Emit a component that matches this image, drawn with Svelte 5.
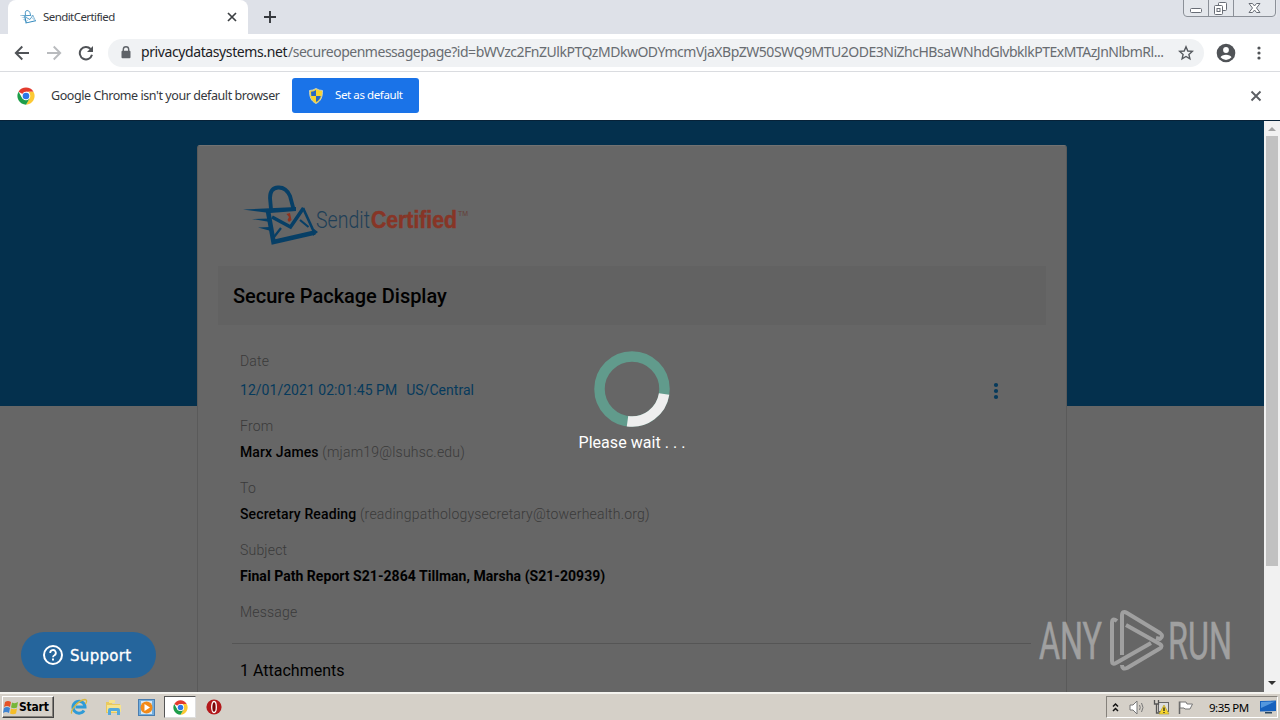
<script>
  const fields = [
    { label: 'From', name: 'Marx James', rest: '(mjam19@lsuhsc.edu)' },
    { label: 'To', name: 'Secretary Reading', rest: '(readingpathologysecretary@towerhealth.org)' }
  ];
</script>

{#snippet chrome(size)}
  <svg width={size} height={size} viewBox="0 0 48 48">
    <circle cx="24" cy="24" r="23" fill="#fff" />
    <path d="M24 24 4.1 12.5A23 23 0 0 1 43.9 12.5H24Z" fill="#e33b2e" />
    <path d="M43.9 12.5A23 23 0 0 1 24 47L34 29.5 33.5 18 31 12.5Z" fill="#fcc934" />
    <path d="M4.1 12.5A23 23 0 0 0 24 47L34 30 24 34 14 30Z" fill="#1e9e4a" />
    <circle cx="24" cy="24" r="11.5" fill="#fff" />
    <circle cx="24" cy="24" r="8.8" fill="#2d78e8" />
  </svg>
{/snippet}

{#snippet lock()}
  <g fill="none" stroke="currentColor" stroke-linejoin="miter">
    <path d="M28 24 27 13Q27 3 35 2.500Q43 2 47 11L50.500 24" stroke-width="3.800" />
    <path d="M25 26 30.500 57 72 47.500" stroke-width="4.600" />
    <path d="M60 23 71 47" stroke-width="2.600" />
    <path d="M29 32 47.500 42 60.500 23" stroke-width="3.600" />
    <path d="M31 52 38 43M65.500 42 57 35" stroke-width="2.200" />
  </g>
  <path d="M0 24.500 53 22V26L27 28ZM9 34 26 33.500 27 37ZM15 42.500 27 42 28 46ZM71 44 75 47 70 51Z" fill="currentColor" />
{/snippet}

<div class="screen">
  <header class="tabs">
    <div class="tab">
      <svg class="fav" width="16" height="16" viewBox="4 0 70 62">{@render lock()}</svg>
      <span class="tabname">SenditCertified</span>
      <svg class="tabx" width="10" height="10" viewBox="0 0 10 10"><path d="M1 1 9 9M9 1 1 9" stroke="#3c4043" stroke-width="1.7" /></svg>
    </div>
    <svg class="plus" width="12" height="12" viewBox="0 0 12 12"><path d="M6 0V12M0 6H12" stroke="#35383d" stroke-width="1.9" /></svg>
    <svg class="winbtns" width="94" height="17" viewBox="0 0 94 17" fill="none" stroke="#686d76">
      <path d="M.5 0V13Q.5 16.5 4 16.5H89Q92.500 16.500 92.500 13V0M25.500 0V16M50.500 0V16" stroke="#8b9098" />
      <rect x="7.500" y="8.500" width="11" height="4" rx="1" fill="#fff" />
      <rect x="35.500" y="2.500" width="8" height="8" rx="1" fill="#fff" />
      <rect x="31.500" y="5.500" width="8" height="9" rx="1" fill="#fff" /><rect x="34" y="8.500" width="3" height="3" />
      <path d="M66 3.500H69.500L71.500 6 73.500 3.500H77L73.500 8 77 12.500H73.500L71.500 10 69.500 12.500H66L69.500 8Z" fill="#fff" />
    </svg>
  </header>

  <nav class="toolbar">
    <svg class="back" width="16" height="16" viewBox="0 0 16 16" fill="none" stroke="#505357" stroke-width="1.9"><path d="M15 8H2M8.300 1.500 1.800 8 8.300 14.500" /></svg>
    <svg class="fwd" width="16" height="16" viewBox="0 0 16 16" fill="none" stroke="#b9bbbe" stroke-width="1.900"><path d="M1 8H14M7.700 1.500 14.200 8 7.700 14.500" /></svg>
    <svg class="reload" width="16" height="16" viewBox="0 0 16 16"><path d="M12.600 4A6.200 6.200 0 1 0 14 9.800" fill="none" stroke="#505357" stroke-width="2" /><path d="M15 1V7H9Z" fill="#505357" /></svg>
    <div class="omni">
      <svg class="padlock" width="10" height="13" viewBox="0 0 10 13"><path d="M2.300 6V3.500A2.700 2.700 0 0 1 7.700 3.500V6" fill="none" stroke="#5f6368" stroke-width="1.400" /><rect x="0.500" y="4.800" width="9" height="7.500" rx="1" fill="#5f6368" /></svg>
      <span class="host">privacydatasystems.net</span><span class="path">/secureopenmessagepage?id=bWVzc2FnZUlkPTQzMDkwODYmcmVjaXBpZW50SWQ9MTU2ODE3NiZhcHBsaWNhdGlvbklkPTExMTAzJnNlbmRl...</span>
      <svg class="star" width="16" height="16" viewBox="0 0 16 16"><path d="M8 1.800 9.800 6 14.300 6.400 10.900 9.400 11.900 13.800 8 11.500 4.100 13.800 5.100 9.400 1.700 6.400 6.200 6Z" fill="none" stroke="#54585d" stroke-width="1.400" /></svg>
    </div>
    <svg class="user" width="20" height="20" viewBox="0 0 20 20"><circle cx="10" cy="10" r="9.300" fill="#505357" /><circle cx="10" cy="7" r="2.900" fill="#fff" /><path d="M4.500 14.200C5.500 10.800 14.500 10.800 15.500 14.200Q13 17 10 17T4.500 14.200Z" fill="#fff" /></svg>
    <svg class="dots" width="4" height="14" viewBox="0 0 4 14" fill="#505357"><circle cx="2" cy="2" r="1.600" /><circle cx="2" cy="7" r="1.600" /><circle cx="2" cy="12" r="1.600" /></svg>
  </nav>

  <div class="infobar">
    {@render chrome(18)}
    <span class="infotext">Google Chrome isn't your default browser</span>
    <button class="default">
      <svg width="14" height="16" viewBox="0 0 14 16"><path d="M7 .5Q10 2.500 13.500 2.500C13.500 9 12 13 7 15.500C2 13 .5 9 .5 2.500Q4 2.500 7 .5Z" fill="#f8d32f" stroke="#c7cfbb" /><path d="M7 2Q5 3.500 2 3.700L2.300 8H7ZM7 8H11.800Q11 12 7 14Z" fill="#2867c4" /></svg>
      <span>Set as default</span>
    </button>
    <svg class="infox" width="12" height="12" viewBox="0 0 12 12"><path d="M1.500 1.500 10.500 10.500M10.500 1.500 1.500 10.500" stroke="#5b5e63" stroke-width="1.900" /></svg>
  </div>

  <main class="viewport">
    <div class="page">
      <section class="card">
        <svg class="brand" width="240" height="68" viewBox="0 0 240 68">
          <g class="logo" transform="translate(1 4)">{@render lock()}<path d="M43.500 29 47 28 48.500 35 46 37 44.500 35 46 32Z" fill="#8e321f" /></g>
          <text class="sendit" x="74" y="46.500" textLength="54" lengthAdjust="spacingAndGlyphs">Sendit</text>
          <text class="certified" x="129" y="46.500" textLength="86" lengthAdjust="spacingAndGlyphs">Certified</text>
          <text class="tm" x="216" y="35" textLength="10" lengthAdjust="spacingAndGlyphs">TM</text>
        </svg>
        <h1>Secure Package Display</h1>
        <div class="details">
          <div class="label first">Date</div>
          <div class="date"><span>12/01/2021 02:01:45 PM</span><span>US/Central</span>
            <svg width="6" height="18" viewBox="0 0 6 18" fill="#063a5c"><circle cx="3" cy="3" r="2.100" /><circle cx="3" cy="9" r="2.100" /><circle cx="3" cy="15" r="2.100" /></svg>
          </div>
          {#each fields as f}
            <div class="label">{f.label}</div>
            <div class="value"><b>{f.name}</b> <span>{f.rest}</span></div>
          {/each}
          <div class="label">Subject</div>
          <div class="value subject">Final Path Report S21-2864 Tillman, Marsha (S21-20939)</div>
          <div class="label">Message</div>
        </div>
        <div class="attachments">1 Attachments</div>
      </section>

      <div class="wait">
        <svg width="76" height="76" viewBox="0 0 76 76" fill="none" stroke-width="10.500">
          <circle cx="38" cy="38" r="32.500" stroke="#619b8c" />
          <path d="M70.100 43A32.500 32.500 0 0 1 33.500 70.200" stroke="#eee" />
        </svg>
        <span>Please wait . . .</span>
      </div>

      <button class="support">
        <svg width="22" height="22" viewBox="0 0 22 22" fill="none" stroke="#fff" stroke-width="2"><circle cx="11" cy="11" r="9" /><path d="M8.200 9A2.800 2.800 0 1 1 12.500 11.200Q11 12 11 13.300" stroke-width="1.800" /><path d="M11 14.600V16.500" /></svg>
        <span>Support</span>
      </button>

      <svg class="anyrun" width="204" height="66" viewBox="0 0 204 66">
        <text x="1" y="51" textLength="63" lengthAdjust="spacingAndGlyphs">ANY</text>
        <text x="130" y="51" textLength="64" lengthAdjust="spacingAndGlyphs">RUN</text>
        <g fill="none" stroke="#a0a0a0" stroke-width="4" stroke-linejoin="round">
          <path d="M79 13Q74 9 74 15V53Q74 57 78 55L113 35" />
          <path d="M84 47V8Q84 2 89 5L122 25Q126 28 122 31L118 30" />
          <path d="M88 17 121 35.500Q126 38 121 41L89 60Q84 62 84 57" />
        </g>
      </svg>
    </div>
    <aside class="scroll"><i class="up"></i><div class="thumb"></div><i class="down"></i></aside>
  </main>

  <footer class="taskbar">
    <button class="start">
      <svg width="16" height="15" viewBox="0 0 16 15"><path d="M2 2Q5 0 8 2L7 7Q4 5 1 7Z" fill="#e65327" /><path d="M9 2.500Q12 4 15 2L14 7.500Q11 9 8 7.500Z" fill="#76b639" /><path d="M1 8Q4 6 7 8L6 13Q3 11 0 13Z" fill="#3f83d1" /><path d="M8 8.500Q11 10 14 8.500L13 13.500Q10 15 7 13.500Z" fill="#f5bd28" /></svg>
      <span>Start</span>
    </button>
    <svg class="ie" width="18" height="18" viewBox="0 0 18 18" fill="none"><path d="M14 12.500A6 6 0 1 1 15 9H5.500" stroke="#2f9bd7" stroke-width="3" /><path d="M2 15.500C-1 14 8 2 15 1.500Q18 2 15.500 6" stroke="#d8b73e" stroke-width="1.300" /></svg>
    <svg class="folder" width="17" height="17" viewBox="0 0 17 17"><path d="M1 3H6L7.500 5H15V14H1Z" fill="#e9c95d" /><path d="M4 1H10V4H4ZM2 6H16V13H2Z" fill="#f6e38e" /><path d="M3 16V11Q3 9 5 9H13Q15 9 15 11V16H12V12H6V16Z" fill="#54a9dc" /></svg>
    <svg class="player" width="17" height="17" viewBox="0 0 17 17"><rect x=".5" y=".5" width="16" height="16" fill="#72aede" stroke="#4a7daf" /><rect x="3" y="2" width="11" height="13" fill="#d9e9f4" /><circle cx="8.500" cy="8.500" r="6" fill="#f28a18" /><path d="M6.500 5V12L12 8.500Z" fill="#fff" /></svg>
    <div class="active">{@render chrome(15)}</div>
    <svg class="opera" width="16" height="16" viewBox="0 0 16 16"><circle cx="8" cy="8" r="7.600" fill="#b3181b" /><ellipse cx="8" cy="8" rx="2.300" ry="5.500" fill="#7c0508" stroke="#fff" stroke-width="1.300" /></svg>
    <div class="tray">
      <svg width="7" height="11" viewBox="0 0 7 11" fill="none" stroke="#111" stroke-width="1.500"><path d="M1 4.500 3.500 2 6 4.500M1 9 3.500 6.500 6 9" /></svg>
      <svg class="speaker" width="17" height="15" viewBox="0 0 17 15" fill="none" stroke="#777"><path d="M1 5H4L8 1V14L4 10H1Z" fill="#fff" /><path d="M10.500 5Q12 7.500 10.500 10M12.500 3Q15.500 7.500 12.500 12" /></svg>
      <svg class="net" width="17" height="16" viewBox="0 0 17 16"><rect x="5.500" y="3.500" width="10" height="9" fill="#ddd" stroke="#666" /><path d="M1.500 1V5H5.500V1M3.500 5V14H8" fill="none" stroke="#555" stroke-width="1.300" /><path d="M11 6 16 15H6Z" fill="#f8d62d" stroke="#ad9825" stroke-width=".6" /><path d="M11 8.500V12M11 13V14" stroke="#222" stroke-width="1.300" /></svg>
      <svg class="flag" width="17" height="15" viewBox="0 0 17 15"><path d="M2.500 14V1.500" stroke="#666" stroke-width="1.500" /><path d="M3 2H9L10 4H15.500L13 9H8L7 8H3Z" fill="#fff" stroke="#777" /></svg>
      <time>9:35 PM</time>
      <svg class="monitor" width="16" height="14" viewBox="0 0 16 14"><path d="M0 1 16 .5V11L0 11.500Z" fill="#1761bd" /><path d="M1 2 15 1.500 1 8Z" fill="#5497de" /><path d="M5 12H12V13.500H5Z" fill="#29465f" /></svg>
    </div>
  </footer>
</div>

<style>
  :global(body) { margin: 0; overflow: hidden; }
  .screen { width: 1280px; height: 720px; display: flex; flex-direction: column; overflow: hidden; font-family: "Noto Sans", sans-serif; background: #fff; }
  .screen * { box-sizing: border-box; }
  svg { display: block; flex: none; }
  button { border: 0; padding: 0; font: inherit; white-space: nowrap; }
  span, time { white-space: nowrap; }
  .tabs { height: 34px; flex: none; display: flex; background: #dee1e8; padding-left: 8px; }
  .tab { width: 240px; background: #fff; border-radius: 8px 8px 0 0; display: flex; align-items: center; padding: 0 11px 0 12px; }
  .fav { color: #348abd; }
  .tabname { font-size: 11.500px; letter-spacing: -0.570px; color: #35383d; margin-left: 7px; padding-bottom: 2px; }
  .tabx { margin-left: auto; }
  .plus { margin: 11px 0 0 16px; }
  .winbtns { margin-left: auto; margin-right: 3px; background: #e4e7ec; }
  .toolbar { height: 38px; flex: none; display: flex; align-items: center; border-bottom: 1px solid #dadce0; padding-left: 14px; }
  .fwd { margin-left: 16px; }
  .reload { margin-left: 16px; }
  .omni { width: 1096px; height: 28px; margin-left: 14px; background: #f0f2f4; border-radius: 14px; display: flex; align-items: center; padding-left: 13px; color: #686c71; font-size: 14px; }
  .host, .path { padding-bottom: 2px; }
  .host { color: #202124; margin-left: 10px; width: 147px; letter-spacing: -0.4px; }
  .path { width: 876px; letter-spacing: -0.485px; }
  .star { margin-left: 14px; }
  .user { margin-left: 12px; }
  .dots { margin-left: 21px; }
  .infobar { height: 48px; flex: none; display: flex; align-items: center; padding: 0 0 1px 17px; }
  .infotext { margin-left: 16px; width: 241px; font-size: 12.500px; letter-spacing: -0.430px; color: #35383d; padding-bottom: 1px; }
  .default { width: 127px; height: 35px; background: #1a73e8; border-radius: 3px; color: #fff; display: flex; align-items: center; padding-left: 17px; gap: 12px; font-size: 11.500px; letter-spacing: -0.4px; }
  .default span { padding-bottom: 2px; }
  .infox { margin-left: auto; margin-right: 18px; }
  .viewport { height: 572px; flex: none; display: flex; border-top: 1px solid #082238; }
  .page { position: relative; width: 1264px; height: 571px; overflow: hidden; background: linear-gradient(#04304d 0 285px, #666 285px); padding: 24px 0 0 197px; font-family: Roboto, sans-serif; }
  .card { width: 870px; height: 570px; background: #666; border: 1px solid #5a5a5a; border-top-color: #727272; border-radius: 3px 3px 0 0; padding: 35px 20px 0; }
  .brand { margin-left: 24px; }
  .logo { color: #073f66; }
  .sendit { font: 300 23px Roboto; fill: #203f57; }
  .certified { font: 700 23px "Liberation Sans"; fill: #873526; stroke: #873526; stroke-width: .5px; }
  .tm { font: 8px "Liberation Sans"; fill: #653e36; }
  h1 { margin: 17px 0 0; height: 59px; padding-left: 15px; background: #626262; font-weight: 500; font-size: 20px; line-height: 60px; color: #000; letter-spacing: -0.02px; }
  .details { padding: 26px 0 0 22px; height: 318px; font-size: 14px; }
  .label { color: #3a3a3a; height: 20px; line-height: 20px; margin-top: 16px; font-weight: 300; letter-spacing: .2px; }
  .label.first { margin-top: 0; }
  .date { height: 25px; margin: 6px 0 12px; display: flex; align-items: center; gap: 9px; color: #063a5c; padding-right: 47px; letter-spacing: .03px; }
  .date + .label { margin-top: 14px; }
  .date { margin-bottom: 0; }
  .date svg { margin-left: auto; position: relative; top: 1px; }
  .value { height: 20px; line-height: 20px; margin-top: 6px; color: #3a3a3a; font-weight: 300; white-space: nowrap; letter-spacing: .2px; }
  .value b { color: #000; font-weight: 500; letter-spacing: .12px; }
  .value.subject { color: #000; font-weight: 700; letter-spacing: .04px; }
  .attachments { width: 799px; margin-left: 14px; border-top: 1px solid #555; padding: 17px 0 0 8px; font-size: 16px; line-height: 20px; font-weight: 400; color: #000; }
  .wait { position: absolute; left: 533px; top: 230px; width: 198px; display: flex; flex-direction: column; align-items: center; color: #fff; font-size: 16px; line-height: 22px; gap: 5px; letter-spacing: .04px; }
  .support { position: absolute; left: 21px; top: 511px; width: 135px; height: 46px; border-radius: 23px; background: #25659c; color: #fff; display: flex; align-items: center; padding-left: 21px; gap: 6px; font: 500 15px "DejaVu Sans", sans-serif; letter-spacing: .3px; -webkit-text-stroke: .3px #fff; }
  .support span { padding-top: 1px; }
  .anyrun { position: absolute; left: 1038px; top: 487px; }
  .anyrun text { font: 400 51.500px Roboto; fill: #a0a0a0; stroke: #a0a0a0; stroke-width: .6px; }
  .scroll { width: 16px; background: #f1f1f1; display: flex; flex-direction: column; align-items: center; padding-top: 6px; }
  .up, .down { border: 4px solid transparent; width: 8px; height: 4px; }
  .up { border-top: 0; border-bottom-color: #a3a3a3; margin-bottom: 5px; }
  .down { border-bottom: 0; border-top-color: #333; margin-top: 115px; }
  .thumb { width: 12px; height: 430px; background: #c1c1c1; }
  .taskbar { height: 28px; flex: none; background: #d5d0c8; border-top: 2px solid #f4f3ef; display: flex; align-items: center; padding: 0 2px; }
  .start { width: 52px; height: 22px; display: flex; align-items: center; background: #d5d0c8; border: 1px solid; border-color: #fff #444 #444 #fff; box-shadow: inset -1px -1px #85817b; font: 700 12px "DejaVu Sans Condensed", "DejaVu Sans", sans-serif; letter-spacing: -.2px; }
  .ie { margin-left: 16px; }
  .folder { margin-left: 17px; }
  .player { margin-left: 16px; }
  .active { width: 32px; height: 22px; margin-left: 9px; background: #fff; border: 1px solid; border-color: #555 #ddd #ddd #555; display: flex; align-items: center; justify-content: center; }
  .opera { margin-left: 10px; }
  .tray { margin-left: auto; width: 172px; height: 22px; border: 1px solid; border-color: #85817b #fff #fff #85817b; display: flex; align-items: center; padding-left: 5px; }
  .speaker { margin-left: 10px; }
  .net { margin-left: 7px; }
  .flag { margin-left: 7px; }
  time { margin-left: 15px; width: 40px; font-size: 11.500px; letter-spacing: -.5px; }
  .monitor { margin-left: 11px; }
</style>
